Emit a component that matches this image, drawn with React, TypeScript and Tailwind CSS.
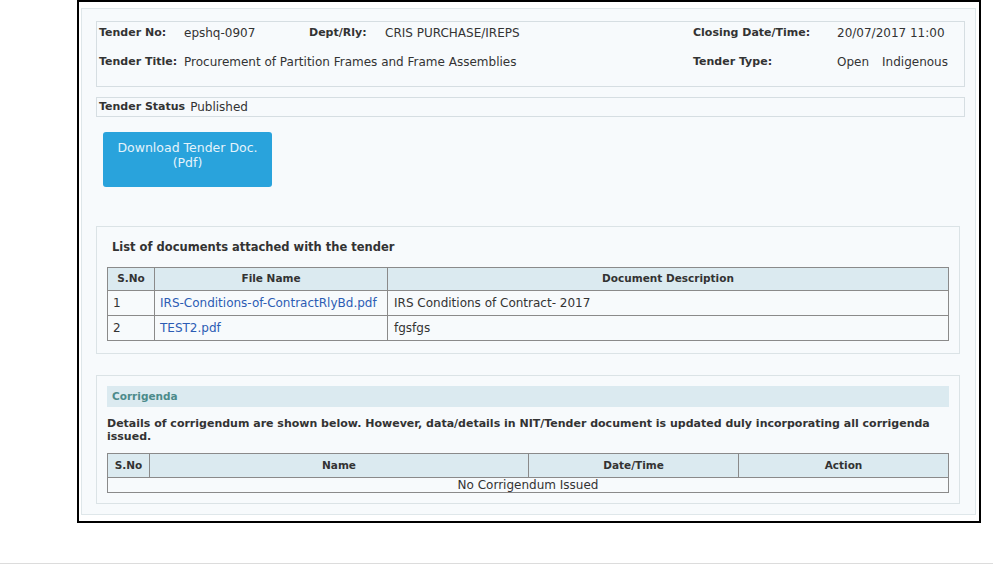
const font = { fontFamily: '"DejaVu Sans", Verdana, sans-serif' };

function Label({ children, className = "" }: { children: React.ReactNode; className?: string }) {
  return <span className={`text-[11px] font-bold text-[#333] ${className}`}>{children}</span>;
}

function DocsTable() {
  const rows = [
    { no: "1", name: "IRS-Conditions-of-ContractRlyBd.pdf", desc: "IRS Conditions of Contract- 2017" },
    { no: "2", name: "TEST2.pdf", desc: "fgsfgs" },
  ];
  return (
    <table className="w-full border-collapse border border-[#8a8a8a] text-[12px]">
      <thead>
        <tr className="h-[23px] bg-[#dbeaf0] text-[10.5px]">
          <th className="w-[47px] border border-[#8a8a8a] text-center font-bold">S.No</th>
          <th className="w-[233px] border border-[#8a8a8a] text-center font-bold">File Name</th>
          <th className="border border-[#8a8a8a] text-center font-bold">Document Description</th>
        </tr>
      </thead>
      <tbody>
        {rows.map((r) => (
          <tr key={r.no} className="h-[25px]">
            <td className="border border-[#8a8a8a] px-[5px]">{r.no}</td>
            <td className="border border-[#8a8a8a] px-[5px] text-[#2c5cb4]">{r.name}</td>
            <td className="border border-[#8a8a8a] px-[6px]">{r.desc}</td>
          </tr>
        ))}
      </tbody>
    </table>
  );
}

function CorrigendaTable() {
  return (
    <table className="w-full border-collapse border border-[#8a8a8a] text-[12px]">
      <thead>
        <tr className="h-[24px] bg-[#dbeaf0] text-[10.5px]">
          <th className="w-[42px] border border-[#8a8a8a] text-center font-bold">S.No</th>
          <th className="w-[379px] border border-[#8a8a8a] text-center font-bold">Name</th>
          <th className="w-[210px] border border-[#8a8a8a] text-center font-bold">Date/Time</th>
          <th className="border border-[#8a8a8a] text-center font-bold">Action</th>
        </tr>
      </thead>
      <tbody>
        <tr className="h-[15px]">
          <td colSpan={4} className="border border-[#8a8a8a] text-center leading-[13px]">
            No Corrigendum Issued
          </td>
        </tr>
      </tbody>
    </table>
  );
}

export default function App() {
  return (
    <div className="h-[565px] w-[993px] bg-white text-[12px] text-[#333]" style={font}>
      <div className="ml-[77px] h-[523px] w-[904px] border-2 border-black bg-white pl-[2px] pr-[3px] pt-[6px]">
        <div className="h-[507px] border border-[#dfe7ea] bg-[#f7fafc] pl-[14px] pr-[10px] pt-[12px]">
          {/* Tender details */}
          <div className="h-[66px] border border-[#d6dee2] bg-[#f7fafc] pl-[2px]">
            <div className="flex h-[22px] items-center">
              <Label className="w-[85px]">Tender No:</Label>
              <span className="w-[125px]">epshq-0907</span>
              <Label className="w-[76px]">Dept/Rly:</Label>
              <span className="flex-1">CRIS PURCHASE/IREPS</span>
              <Label className="w-[144px]">Closing Date/Time:</Label>
              <span className="w-[127px]">20/07/2017 11:00</span>
            </div>
            <div className="mt-[7px] flex h-[22px] items-center">
              <Label className="w-[85px]">Tender Title:</Label>
              <span className="flex-1">Procurement of Partition Frames and Frame Assemblies</span>
              <Label className="w-[144px]">Tender Type:</Label>
              <span className="flex w-[127px] gap-[13px]">
                <span>Open</span>
                <span>Indigenous</span>
              </span>
            </div>
          </div>

          {/* Status */}
          <div className="mt-[10px] flex h-[20px] items-center border border-[#d6dee2] pl-[2px]">
            <Label>Tender Status</Label>
            <span className="ml-[5px]">Published</span>
          </div>

          <button className="ml-[7px] mt-[15px] flex h-[55px] w-[169px] flex-col items-center rounded-[3px] bg-[#29a3dc] pt-[8px] text-[12.5px] leading-[15px] text-[#e4f3fb]">
            <span>Download Tender Doc.</span>
            <span>(Pdf)</span>
          </button>

          {/* Documents */}
          <div className="mt-[39px] mr-[5px] h-[128px] border border-[#dbe3e6] px-[10px] pt-[13px]">
            <div className="mb-[13px] ml-[5px] text-[11.5px] font-bold leading-[14px] text-[#333]">
              List of documents attached with the tender
            </div>
            <DocsTable />
          </div>

          {/* Corrigenda */}
          <div className="mt-[21px] mr-[5px] h-[129px] border border-[#dbe3e6] px-[10px] pt-[10px]">
            <div className="flex h-[21px] items-center bg-[#dbeaf0] pl-[5px] text-[10.5px] font-bold text-[#4c8b8b]">
              Corrigenda
            </div>
            <div className="mt-[10px] text-[11px] font-bold leading-[13px] text-[#333]">
              Details of corrigendum are shown below. However, data/details in NIT/Tender document is updated duly incorporating all corrigenda issued.
            </div>
            <div className="mt-[10px]">
              <CorrigendaTable />
            </div>
          </div>
        </div>
      </div>
      <div className="mt-[40px] h-px w-full bg-[#dcdcdc]" />
    </div>
  );
}
